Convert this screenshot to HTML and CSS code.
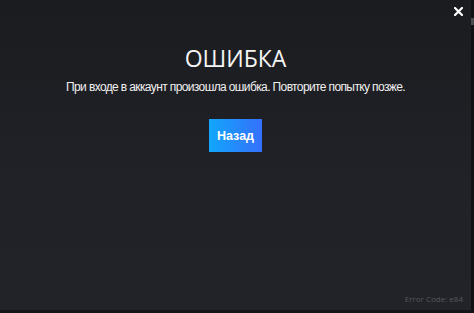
FILE: index.html
```html
<!DOCTYPE html>
<html lang="ru">
<head>
<meta charset="utf-8">
<link rel="stylesheet" href="styles.css">
</head>
<body>
<div class="window">
  <div class="dialog">
    <button class="close" aria-label="Закрыть">
      <svg width="9" height="9" viewBox="0 0 9 9"><path d="M1 1L8 8M8 1L1 8" stroke="#fff" stroke-width="2.2" stroke-linecap="square"/></svg>
    </button>
    <div class="content">
      <h1 class="title">ОШИБКА</h1>
      <p class="message">При входе в аккаунт произошла ошибка. Повторите попытку позже.</p>
      <button class="back">Назад</button>
    </div>
    <div class="code">Error Code: e84</div>
  </div>
  <div class="side"><div class="thumb"></div></div>
</div>
</body>
</html>
```
FILE: styles.css
```css
html, body {
  margin: 0;
  padding: 0;
  width: 474px;
  height: 313px;
  overflow: hidden;
  background: #131418;
}
.window {
  display: flex;
  width: 474px;
  height: 310px;
}
.dialog {
  position: relative;
  flex: 1;
  display: flex;
  flex-direction: column;
  background: linear-gradient(180deg, #1b1c20 0%, #212227 60%, #222328 100%);
  font-family: "Liberation Sans", Arial, sans-serif;
}
.side {
  width: 3px;
  background: #101115;
  padding-top: 18px;
}
.thumb {
  width: 3px;
  height: 7px;
  background: #4a4b52;
}
.close {
  position: absolute;
  top: 7px;
  right: 8px;
  width: 9px;
  height: 9px;
  padding: 0;
  border: 0;
  background: none;
  display: flex;
}
.content {
  display: flex;
  flex-direction: column;
  align-items: center;
  padding-top: 45px;
}
.title {
  margin: 0;
  font-family: "Open Sans", "Liberation Sans", sans-serif;
  font-weight: 400;
  font-size: 23px;
  letter-spacing: 0;
  color: #f4f4f4;
  line-height: 26px;
}
.message {
  margin: 9px 0 0;
  font-family: "Liberation Sans", Arial, sans-serif;
  font-size: 12px;
  letter-spacing: -0.62px;
  color: #f0f0f0;
  line-height: 15px;
}
.back {
  margin-top: 24px;
  width: 53px;
  height: 33px;
  border: 0;
  padding: 0;
  background: linear-gradient(90deg, #12a6fb 0%, #3570fb 100%);
  color: #fff;
  font-family: "Liberation Sans", Arial, sans-serif;
  font-weight: 700;
  font-size: 12.5px;
}
.code {
  position: absolute;
  right: 8px;
  bottom: 6px;
  font-family: "Open Sans", sans-serif;
  font-size: 8px;
  color: #56575c;
}
```
